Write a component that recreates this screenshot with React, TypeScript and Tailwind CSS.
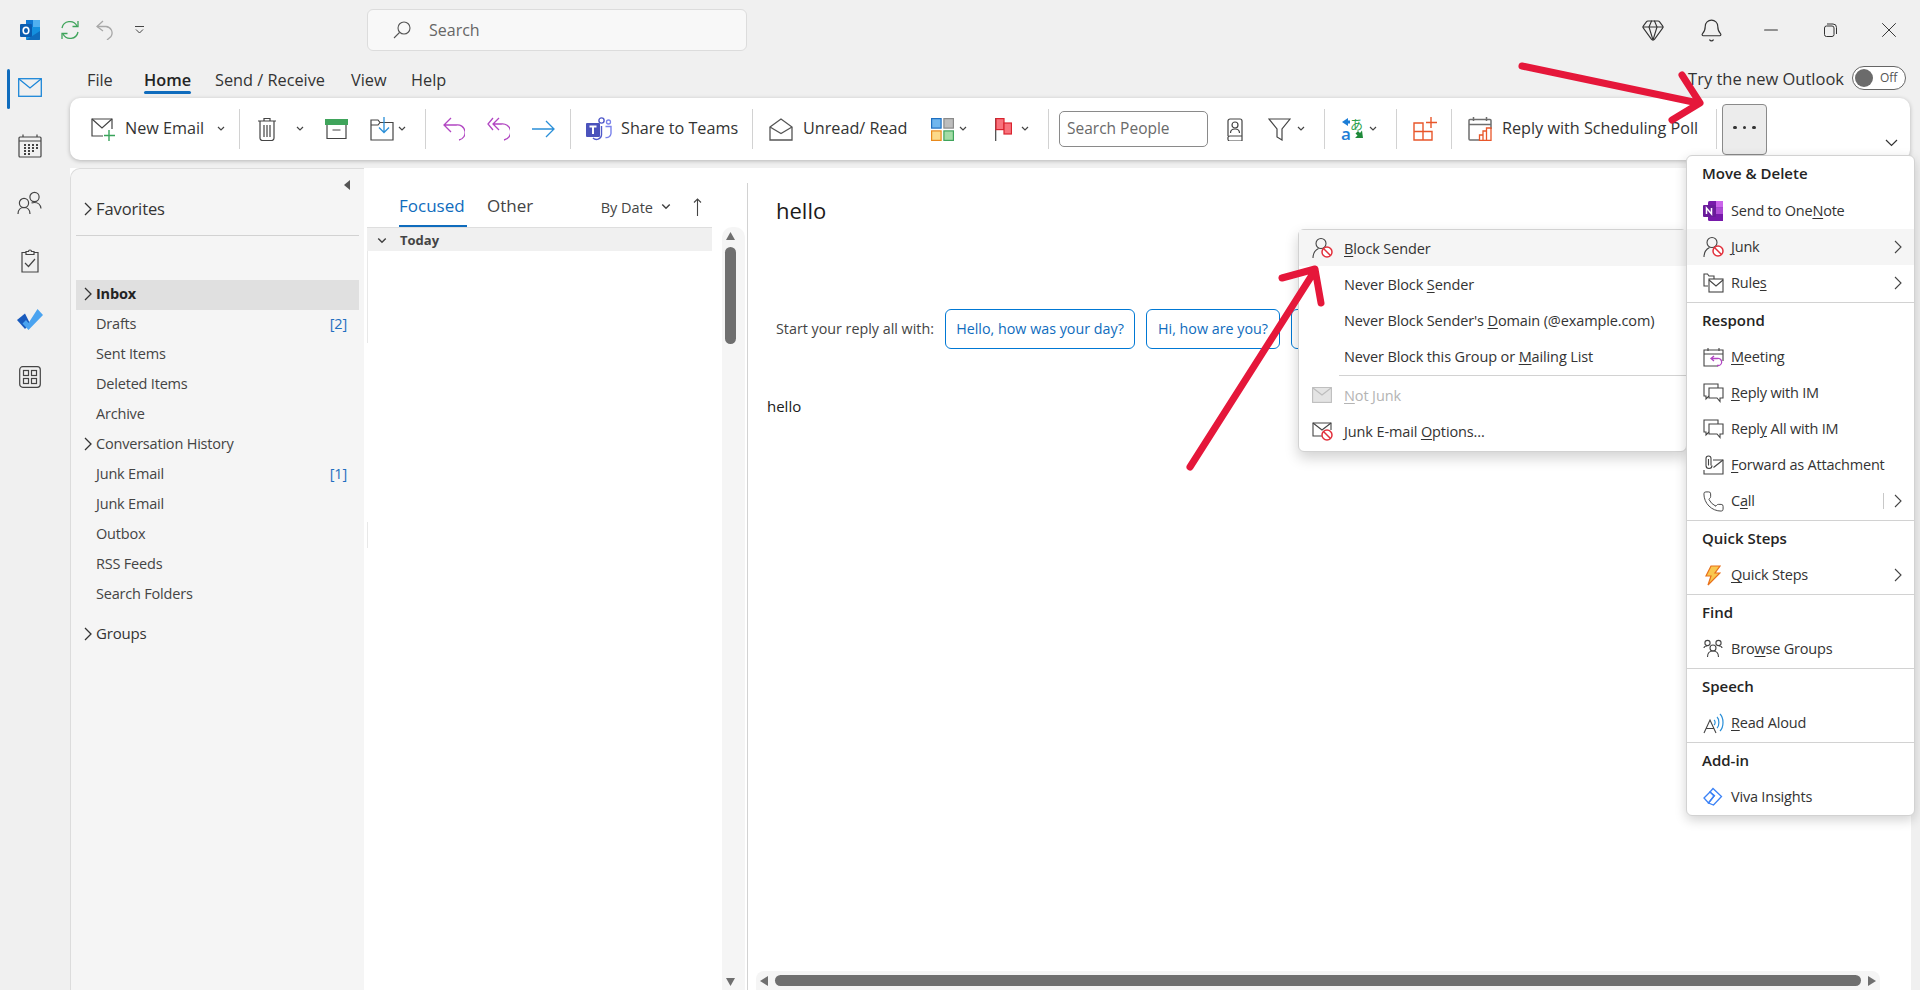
import { ReactNode } from "react";
import { Bell, Gem, Minus, Phone, X } from "lucide-react";

// small drawing helpers
const Chev = ({ className = "" }: { className?: string }) => (
  <svg width="8" height="6" viewBox="0 0 8 6" className={`shrink-0 ${className}`} fill="none" stroke="#444" strokeWidth="1.2">
    <path d="M1 1l3 3 3-3" />
  </svg>
);

const RightChev = () => (
  <svg width="8" height="14" viewBox="0 0 8 14" fill="none" stroke="#444" strokeWidth="1.1">
    <path d="M1 1l6 6-6 6" />
  </svg>
);

const Sep = ({ className = "" }: { className?: string }) => <div className={`w-px h-[40px] bg-[#d2d2d2] shrink-0 ${className}`} />;

const NoEntry = ({ cx = 16, cy = 16, r = 4.6 }: { cx?: number; cy?: number; r?: number }) => (
  <g fill="#fff" stroke="#e2303c" strokeWidth="1.5">
    <circle cx={cx} cy={cy} r={r} />
    <path d={`M${cx - r * 0.7} ${cy - r * 0.7}L${cx + r * 0.7} ${cy + r * 0.7}`} />
  </g>
);

const BlockIcon = () => (
  <svg width="21" height="22" viewBox="0 0 21 22" fill="none" stroke="#444" strokeWidth="1.1">
    <circle cx="9" cy="6.500" r="5" />
    <path d="M1 21c0-5 2.500-8 5.500-9.500" />
    <NoEntry cx={15} cy={15} r={5} />
  </svg>
);

const OneNoteIcon = () => (
  <svg width="20" height="20" viewBox="0 0 20 20">
    <rect x="5" y="0" width="15" height="20" rx="1.500" fill="#7719aa" />
    <rect x="13" y="0" width="7" height="6.500" fill="#ca64ea" />
    <rect x="13" y="6.500" width="7" height="6.500" fill="#ae4bd5" />
    <rect x="13" y="13" width="7" height="7" fill="#7719aa" />
    <rect x="0" y="4" width="13" height="12" rx="1" fill="#6a1b9a" />
    <path d="M3.500 13V7l5 6V7" fill="none" stroke="#fff" strokeWidth="1.500" />
  </svg>
);

const RulesIcon = () => (
  <svg width="21" height="20" viewBox="0 0 21 20" fill="none" stroke="#444" strokeWidth="1.1">
    <path d="M5 13H1V1h3.500l1.500 2h5v3" />
    <rect x="6" y="6" width="14" height="13" fill="#fff" />
    <path d="M6 7l7 6 7-6" />
  </svg>
);

const MeetingIcon = () => (
  <svg width="21" height="20" viewBox="0 0 21 20" fill="none" stroke="#444" strokeWidth="1.1">
    <path d="M15 19H1V3h19v11" />
    <path d="M1 7h19M5 1v3M16 1v3" />
    <path d="M11 9l-3 2.500 3 2.500M8 11.500h6a3.500 3.500 0 0 1 2 7h-2" stroke="#b146c2" strokeWidth="1.300" />
  </svg>
);

const ImIcon = () => (
  <svg width="21" height="20" viewBox="0 0 21 20" fill="none" stroke="#444" strokeWidth="1.1">
    <path d="M15 5V1H1v12h2v3l3-3" />
    <path d="M6 5h14v10h-3v3.500L14 15H6z" fill="#fff" />
  </svg>
);

const AttachIcon = () => (
  <svg width="21" height="20" viewBox="0 0 21 20" fill="none" stroke="#444" strokeWidth="1.1">
    <path d="M10 5h10v14H1v-4" />
    <path d="M10.500 12.500L20 5" />
    <path d="M8 10.500V3.500a2.500 2.500 0 0 0-5 0v7a3 3 0 0 0 6 0" />
    <path d="M5.500 4v6.500" />
  </svg>
);

const GroupsIcon = () => (
  <svg width="20" height="20" viewBox="0 0 20 20" fill="none" stroke="#444" strokeWidth="1.1">
    <circle cx="4.500" cy="4" r="2.600" />
    <circle cx="15.500" cy="4" r="2.600" />
    <circle cx="10" cy="9" r="3" />
    <path d="M1 9c0-1.500 1-2 3-2M19 9c0-1.500-1-2-3-2M4.500 18c0-4 2-6 5.500-6s5.500 2 5.500 6" />
  </svg>
);

const ReadIcon = () => (
  <svg width="21" height="21" viewBox="0 0 21 21" fill="none">
    <path d="M1 20L7 7l6 13M3 15.500h8" stroke="#444" strokeWidth="1.100" />
    <path d="M11 7c1.500 1 1.500 4 0 5M14 4c2.500 2 2.500 9 0 11M17 1c4 4 4 13 0 17" stroke="#2a8fd8" strokeWidth="1.200" />
  </svg>
);

const VivaIcon = () => (
  <svg width="20" height="20" viewBox="0 0 20 20" fill="none" stroke="#3b82f6" strokeWidth="1.300">
    <path d="M1 11l6-6 4 4-5.500 7z" />
    <path d="M7 5l3-3.500 8.500 8-8 8.500-5-2 6-7.500z" />
  </svg>
);

const BoltIcon = () => (
  <svg width="16" height="21" viewBox="0 0 16 21" fill="#f9c74f" stroke="#e8701a" strokeWidth="1.200">
    <path d="M6 1h9l-5 7h5L3 20l3-9H1z" />
  </svg>
);

const u = (s: string) => <u className="underline-offset-2">{s}</u>;

const MenuHead = ({ children, first }: { children: ReactNode; first?: boolean }) => (
  <div className={`flex items-center pl-[15px] pb-[2px] text-[15px] font-semibold text-[#242424] ${first ? "h-[37px]" : "h-[36px]"}`}>{children}</div>
);

const MenuRow = ({ icon, children, arrow, hover, divider }: { icon: ReactNode; children: ReactNode; arrow?: boolean; hover?: boolean; divider?: boolean }) => (
  <div className={`h-[36px] flex items-center text-[14.5px] tracking-[-0.2px] text-[#333] ${hover ? "bg-[#f5f5f5]" : ""}`}>
    <div className="w-[44px] flex justify-center pl-[8px] shrink-0">{icon}</div>
    <div className="flex-1 whitespace-nowrap">{children}</div>
    {divider && <div className="w-px h-[16px] bg-[#c8c8c8] mr-[10px]" />}
    {arrow && <div className="mr-[12px] flex items-center"><RightChev /></div>}
  </div>
);

const MenuLine = () => (
  <div className="h-[2px] pt-px">
    <div className="h-px bg-[#d2d2d2]" />
  </div>
);

const SubRow = ({ icon, children, hover, muted }: { icon?: ReactNode; children: ReactNode; hover?: boolean; muted?: boolean }) => (
  <div className={`h-[36px] flex items-center text-[14.5px] tracking-[-0.12px] ${muted ? "text-[#b4b4b4]" : "text-[#333]"} ${hover ? "bg-[#f5f5f5]" : ""}`}>
    <div className="w-[45px] flex justify-center pl-[1px] shrink-0">{icon}</div>
    <div className="whitespace-nowrap pt-[1px]">{children}</div>
  </div>
);

const folders = [
  { name: "Drafts", badge: "[2]" },
  { name: "Sent Items" },
  { name: "Deleted Items" },
  { name: "Archive" },
  { name: "Conversation History", caret: true },
  { name: "Junk Email", badge: "[1]" },
  { name: "Junk Email" },
  { name: "Outbox" },
  { name: "RSS Feeds" },
  { name: "Search Folders" },
];

const Caret = () => (
  <svg width="8" height="14" viewBox="0 0 8 14" fill="none" stroke="#333" strokeWidth="1.300">
    <path d="M1 1l6 6-6 6" />
  </svg>
);

export default function App() {
  return (
    <div className="relative w-[1920px] h-[990px] overflow-hidden bg-[#f0f0f0] font-['Open_Sans',sans-serif] text-[#333]">
      {/* title bar */}
      <div className="h-[58px] flex items-start relative">
        <div className="flex items-center h-[60px] pl-[20px]">
          <svg width="20" height="20" viewBox="0 0 20 20">
            <rect x="6" y="0" width="14" height="20" rx="1" fill="#1490df" />
            <rect x="6" y="0" width="7" height="7" fill="#0f78d4" />
            <rect x="13" y="0" width="7" height="7" fill="#50b0f0" />
            <path d="M6 20l14-9v8a1 1 0 0 1-1 1z" fill="#0f6cbd" />
            <rect x="0" y="4" width="12" height="13" rx="1" fill="#0a5cb0" />
            <ellipse cx="6" cy="10.500" rx="2.800" ry="3.300" fill="none" stroke="#fff" strokeWidth="1.600" />
          </svg>
          <svg className="ml-[20px]" width="20" height="20" viewBox="0 0 20 20" fill="none" stroke="#3fa45b" strokeWidth="1.300">
            <path d="M2 8a8 8 0 0 1 15-2" />
            <path d="M18 1v5.500h-5.500" />
            <path d="M18 12a8 8 0 0 1-15 2" />
            <path d="M2 19v-5.500h5.500" />
          </svg>
          <svg className="ml-[16px]" width="18" height="20" viewBox="0 0 18 20" fill="none" stroke="#a8a8a8" strokeWidth="1.300">
            <path d="M7 1L1 6.500 7 11" />
            <path d="M1 6.500h9a6.500 6.500 0 0 1 5 10L11 20" />
          </svg>
          <svg className="ml-[21px]" width="9" height="8" viewBox="0 0 9 8" fill="none" stroke="#444" strokeWidth="1">
            <path d="M0 .5h9M1 3.500l3.500 3.500L8 3.500" />
          </svg>
          <div className="ml-[223px] w-[380px] h-[42px] rounded-[6px] bg-[#f8f8f8] border border-[#dcdcdc] flex items-center pl-[25px] text-[16px] text-[#666]">
            <svg width="18" height="18" viewBox="0 0 18 18" fill="none" stroke="#555" strokeWidth="1.100">
              <circle cx="11" cy="7" r="6" />
              <path d="M6.500 11.500L1 17" />
            </svg>
            <span className="ml-[18px]">Search</span>
          </div>
        </div>
        <div className="flex items-center h-[60px] ml-auto">
          <Gem size={24} strokeWidth={1.1} color="#333" />
          <Bell size={25} strokeWidth={1.1} color="#333" className="ml-[34px]" />
          <Minus size={22} strokeWidth={1.1} color="#333" className="ml-[36px]" />
          <svg className="ml-[42px]" width="13" height="14" viewBox="0 0 13 14" fill="none" stroke="#333" strokeWidth="1">
            <rect x=".5" y="3" width="9.500" height="10.500" rx="2" />
            <path d="M3 1h6a3.500 3.500 0 0 1 3.500 3.500V11" />
          </svg>
          <X size={26} strokeWidth={0.9} color="#333" className="ml-[39px] mr-[18px]" />
        </div>
      </div>

      <div className="flex h-[932px]">
        {/* left rail */}
        <div className="w-[70px] shrink-0 relative pr-[11px]">
          <div className="absolute left-[7px] top-[11px] w-[3px] h-[40px] bg-[#0f6cbd] rounded-full" />
          <div className="h-[58px] flex items-center justify-center">
            <svg width="24" height="19" viewBox="0 0 24 19" fill="none" stroke="#1c86d8" strokeWidth="1.300">
              <rect x=".7" y=".7" width="22.600" height="17.600" />
              <path d="M1 1l11 9 11-9" />
            </svg>
          </div>
          <div className="h-[58px] flex items-center justify-center pt-[2px]">
            <svg width="24" height="24" viewBox="0 0 24 24" fill="none" stroke="#444" strokeWidth="1.200">
              <rect x="1" y="3" width="22" height="20" rx="1" />
              <path d="M1 7h22M5 .5V3M19 .5V3" />
              <path d="M6 11h2M10 11h2M14 11h2M18 11h2M6 14h2M10 14h2M14 14h2M18 14h2M6 17h2M10 17h2M14 17h2M6 20h2M10 20h2" strokeWidth="2" />
            </svg>
          </div>
          <div className="h-[58px] flex items-center justify-center">
            <svg width="25" height="24" viewBox="0 0 25 24" fill="none" stroke="#444" strokeWidth="1.200">
              <circle cx="7" cy="12" r="4.600" />
              <path d="M1 23c0-4 2.500-6.500 6-6.500s6 2.500 6 6.500" />
              <circle cx="17.500" cy="6" r="4.600" />
              <path d="M14.500 12c.8-.4 2-.5 3-.5 3.500 0 6 2.500 6.500 6" />
            </svg>
          </div>
          <div className="h-[58px] flex items-center justify-center">
            <svg width="18" height="24" viewBox="0 0 18 24" fill="none" stroke="#444" strokeWidth="1.200">
              <path d="M5 3.500H1V23h16V3.500h-4" />
              <path d="M5 5.500V2.500h2.500a1.500 1.500 0 0 1 3 0H13v3z" />
              <path d="M4 14l3.500 3.500L14 10" />
            </svg>
          </div>
          <div className="h-[58px] flex items-center justify-center">
            <svg width="26" height="21" viewBox="0 0 26 21">
              <path d="M8 4.500L0 11l8 9 5-5.500z" fill="#185abd" />
              <path d="M20.500 0L26 6 11.500 21 5.500 14.500 9 11l2.500 3z" fill="#4aa3f0" />
            </svg>
          </div>
          <div className="h-[58px] flex items-center justify-center">
            <svg width="22" height="22" viewBox="0 0 22 22" fill="none" stroke="#444" strokeWidth="1.200">
              <rect x=".7" y=".7" width="20.600" height="20.600" rx="3" />
              <rect x="4.500" y="4.500" width="5" height="5" />
              <rect x="12.500" y="4.500" width="5" height="5" />
              <rect x="4.500" y="12.500" width="5" height="5" />
              <rect x="12.500" y="12.500" width="5" height="5" />
            </svg>
          </div>
        </div>

        <div className="flex-1 min-w-0 flex flex-col">
          {/* tabs */}
          <div className="h-[40px] flex items-center pl-[17px] text-[16.3px] text-[#333] relative">
            <div className="w-[57px] pt-[4px]">File</div>
            <div className="w-[71px] pt-[4px] relative font-semibold text-[#242424]">
              Home
              <div className="absolute left-0 top-[27px] w-[47px] h-[3px] bg-[#0f6cbd] rounded-full" />
            </div>
            <div className="w-[136px] pt-[4px] whitespace-nowrap">Send / Receive</div>
            <div className="w-[60px] pt-[4px]">View</div>
            <div className="pt-[4px]">Help</div>
            <div className="ml-auto flex items-center mr-[14px]">
              <span className="text-[16.5px] pt-[2px] whitespace-nowrap">Try the new Outlook</span>
              <div className="ml-[8px] w-[54px] h-[24px] rounded-full border border-[#666] bg-white flex items-center pl-[2px] text-[12px] text-[#555]">
                <div className="w-[18px] h-[18px] rounded-full bg-[#6b6b6b]" />
                <span className="ml-[7px]">Off</span>
              </div>
            </div>
          </div>

          {/* ribbon */}
          <div className="h-[62px] mr-[10px] bg-white rounded-[10px] shadow-[0_1px_4px_rgba(0,0,0,0.25)] flex items-center pl-[21px] text-[16.2px] text-[#333] whitespace-nowrap relative z-10">
            <svg className="shrink-0" width="24" height="23" viewBox="0 0 24 23" fill="none" stroke="#444" strokeWidth="1.200">
              <path d="M12 18H1V1h20v10" />
              <path d="M1 1l10 9 10-9" />
              <path d="M18 12v11M13 17.500h11" stroke="#38a35a" strokeWidth="1.400" />
            </svg>
            <span className="ml-[10px] w-[80px] pb-[2px]">New Email</span>
            <Chev className="ml-[12px]" />
            <Sep className="ml-[14px]" />
            <svg className="ml-[18px] shrink-0" width="18" height="24" viewBox="0 0 18 24" fill="none" stroke="#444" strokeWidth="1.200">
              <path d="M0 4h18M6 4V1.500h6V4M2 4v17a2.500 2.500 0 0 0 2.500 2.500h9A2.500 2.500 0 0 0 16 21V4M6 8v12M9 8v12M12 8v12" />
            </svg>
            <Chev className="ml-[20px]" />
            <svg className="ml-[21px] shrink-0" width="23" height="20" viewBox="0 0 23 20">
              <rect x="0" y="0" width="23" height="6" fill="#3fa45b" />
              <path d="M2 6v13.500h19V6M7.500 11h8" fill="none" stroke="#444" strokeWidth="1.200" />
            </svg>
            <svg className="ml-[22px] shrink-0" width="24" height="24" viewBox="0 0 24 24" fill="none" stroke="#444" strokeWidth="1.200">
              <path d="M1 23V3h7l2 2.500h13V23z" />
              <path d="M1 8h7l2-2.500" />
              <path d="M14 0v15M9 10.500l5 5 5-5" stroke="#2a8fd8" strokeWidth="1.300" />
            </svg>
            <Chev className="ml-[4px]" />
            <Sep className="ml-[19px]" />
            <svg className="ml-[17px] shrink-0" width="22" height="24" viewBox="0 0 22 24" fill="none" stroke="#b146c2" strokeWidth="1.300">
              <path d="M8 1L1 8l7 7M1 8h12a7.500 7.500 0 0 1 3 15" />
            </svg>
            <svg className="ml-[22px] shrink-0" width="23" height="24" viewBox="0 0 23 24" fill="none" stroke="#b146c2" strokeWidth="1.300">
              <path d="M6 1L1 7l5 6M12 1L6 7l6 6M6 7h8a7.500 7.500 0 0 1 3 16" />
            </svg>
            <svg className="ml-[22px] shrink-0" width="23" height="18" viewBox="0 0 23 18" fill="none" stroke="#2a8fd8" strokeWidth="1.300">
              <path d="M0 9h22M14 1l8 8-8 8" />
            </svg>
            <Sep className="ml-[15px]" />
            <svg className="ml-[15px] shrink-0" width="26" height="24" viewBox="0 0 26 24" fill="none">
              <circle cx="15.500" cy="3.500" r="2.600" stroke="#5059c9" strokeWidth="1.400" />
              <circle cx="22.500" cy="5" r="2" stroke="#7b83eb" strokeWidth="1.300" />
              <path d="M15.500 9v9a5 5 0 0 1-8.500 3" stroke="#5059c9" strokeWidth="1.400" />
              <path d="M19.500 9.500h5.500v7a4.500 4.500 0 0 1-5.500 4" stroke="#7b83eb" strokeWidth="1.400" />
              <rect x="0" y="6" width="14" height="14" rx="1" fill="#4b53bc" />
              <path d="M3.500 9.500h7M7 9.500V17" stroke="#fff" strokeWidth="2" />
            </svg>
            <span className="ml-[9px] w-[116px] pb-[2px]">Share to Teams</span>
            <Sep className="ml-[15px]" />
            <svg className="ml-[16px] shrink-0" width="24" height="23" viewBox="0 0 24 23" fill="none" stroke="#555" strokeWidth="1.300">
              <path d="M1 9l11-8 11 8v13H1z" />
              <path d="M1 9l11 6.500L23 9" />
            </svg>
            <span className="ml-[10px] w-[105px] pb-[2px]">Unread/ Read</span>
            <svg className="ml-[23px] shrink-0" width="23" height="23" viewBox="0 0 23 23" strokeWidth="1.200">
              <rect x=".6" y=".6" width="9.500" height="9.500" fill="#6fb6ee" stroke="#1e6fc0" />
              <rect x="12.900" y=".6" width="9.500" height="9.500" fill="#bdbdbd" stroke="#8a8a8a" />
              <rect x=".6" y="12.900" width="9.500" height="9.500" fill="#fcd98a" stroke="#e8891c" />
              <rect x="12.900" y="12.900" width="9.500" height="9.500" fill="#a3dca6" stroke="#3fa45b" />
            </svg>
            <Chev className="ml-[5px]" />
            <svg className="ml-[28px] shrink-0" width="17" height="23" viewBox="0 0 17 23">
              <path d="M.7 0v23" stroke="#444" strokeWidth="1.200" />
              <rect x="1" y=".6" width="8" height="11" fill="#f8727c" stroke="#d9232e" strokeWidth="1.200" />
              <rect x="9" y="5" width="7.500" height="11" fill="#f8727c" stroke="#d9232e" strokeWidth="1.200" />
            </svg>
            <Chev className="ml-[9px]" />
            <Sep className="ml-[19px]" />
            <div className="ml-[10px] w-[149px] h-[36px] rounded-[5px] border border-[#8a8a8a] flex items-center pl-[7px] text-[15.5px] text-[#6a6a6a] shrink-0">Search People</div>
            <svg className="ml-[19px] shrink-0" width="16" height="23" viewBox="0 0 16 23" fill="none" stroke="#444" strokeWidth="1.200">
              <path d="M1 18V3a2 2 0 0 1 2-2h10a2 2 0 0 1 2 2v20H3a2 2 0 0 1-2-2.500A2 2 0 0 1 3 18h12" />
              <circle cx="8" cy="7" r="3" />
              <path d="M3.500 15c0-2.500 2-4 4.500-4s4.500 1.500 4.500 4" />
            </svg>
            <svg className="ml-[25px] shrink-0" width="23" height="23" viewBox="0 0 23 23" fill="none" stroke="#444" strokeWidth="1.200">
              <path d="M1 1h21l-8 10v11l-5-3v-8z" />
            </svg>
            <Chev className="ml-[6px]" />
            <Sep className="ml-[19px]" />
            <svg className="ml-[16px] shrink-0 overflow-visible" width="24" height="24" viewBox="0 0 24 24">
              <path d="M1 5l6-4v2.500h2v3H7V9z" fill="#1c7dd6" />
              <path d="M22 21h-8l2.500-2.500-2-2 2.500-2.500 2 2L21 13.500z" fill="#1f8a3a" />
              <text x="9" y="12" fontSize="13" fill="#2ba04a" fontFamily="'Noto Sans CJK JP',sans-serif">あ</text>
              <text x="0" y="23" fontSize="17" fontWeight="600" fill="#1c7dd6" fontFamily="'Open Sans',sans-serif">a</text>
            </svg>
            <Chev className="ml-[4px]" />
            <Sep className="ml-[19px]" />
            <svg className="ml-[16px] shrink-0" width="24" height="24" viewBox="0 0 24 24" fill="none" stroke="#e8562a" strokeWidth="1.400">
              <path d="M1 6h9v8.500h9V23H1zM1 14.500h9M10 14.500V23" />
              <path d="M18 0v11M13 5.500h11" />
            </svg>
            <Sep className="ml-[14px]" />
            <svg className="ml-[16px] shrink-0" width="24" height="24" viewBox="0 0 24 24" fill="none" stroke="#6e6e6e" strokeWidth="1.500">
              <path d="M11 23H2a1 1 0 0 1-1-1V3.500a1 1 0 0 1 1-1h20a1 1 0 0 1 1 1V12M1 7.500h22M5.500 0v4M18.500 0v4" />
              <path d="M11.500 18h3.500v5.500h-3.500zM15 14h3.500v9.500H15zM18.500 11H23v12.500h-4.500z" stroke="#e8562a" strokeWidth="1.300" />
            </svg>
            <span className="ml-[10px] w-[198px] pb-[2px]">Reply with Scheduling Poll</span>
            <Sep className="ml-[16px]" />
            <div className="ml-[5px] w-[45px] h-[51px] rounded-[4px] border border-[#8a8a8a] bg-[#ececec] flex items-center justify-center gap-[6px] pb-[3px] shrink-0">
              <div className="w-[3.500px] h-[3.500px] rounded-full bg-[#333]" />
              <div className="w-[3.500px] h-[3.500px] rounded-full bg-[#333]" />
              <div className="w-[3.500px] h-[3.500px] rounded-full bg-[#333]" />
            </div>
            <svg className="ml-[118px] mt-[28px] shrink-0" width="13" height="8" viewBox="0 0 13 8" fill="none" stroke="#333" strokeWidth="1.200">
              <path d="M1 1l5.500 5.500L12 1" />
            </svg>
          </div>

          {/* panes */}
          <div className="flex-1 min-h-0 mt-[8px] mr-[9px] flex bg-white">
            {/* nav */}
            <div className="w-[294px] shrink-0 bg-[#f5f5f5] rounded-tl-[10px] border-l border-t border-[#dcdcdc] text-[14.5px] tracking-[-0.2px] text-[#444] pr-[5px] pl-[5px]">
              <div className="h-[66px] relative">
                <svg className="absolute right-[8px] top-[11px]" width="7" height="10" viewBox="0 0 7 10" fill="#555">
                  <path d="M6 0v10L0 5z" />
                </svg>
                <div className="flex items-center h-full pl-[8px] pt-[14px] text-[16.500px] tracking-[-0.1px] text-[#333]">
                  <Caret />
                  <span className="ml-[4px]">Favorites</span>
                </div>
              </div>
              <div className="h-px bg-[#d2d2d2]" />
              <div className="h-[44px]" />
              <div className="h-[30px] flex items-center pl-[8px] pb-[2px] bg-[#e0e0e0] font-bold text-[#242424]">
                <Caret />
                <span className="ml-[4px]">Inbox</span>
              </div>
              {folders.map((f, i) => (
                <div key={i} className="h-[30px] flex items-center pl-[8px] pb-[3px]">
                  <div className="w-[8px]">{f.caret && <Caret />}</div>
                  <span className="ml-[4px] whitespace-nowrap">{f.name}</span>
                  {f.badge && <span className="ml-auto mr-[12px] text-[#1f6fc0]">{f.badge}</span>}
                </div>
              ))}
              <div className="h-[25px] flex items-center pl-[8px] mt-[12px] pb-[2px] text-[15px] text-[#333]">
                <Caret />
                <span className="ml-[4px]">Groups</span>
              </div>
            </div>

            {/* message list */}
            <div className="w-[383px] shrink-0 flex flex-col">
              <div className="h-[59px] flex items-end pl-[35px] relative">
                <div className="w-[68px] h-[42px] text-[17px] text-[#0f6cbd] border-b-2 border-[#0f6cbd] flex items-start pt-[8px]">Focused</div>
                <div className="ml-[20px] h-[42px] text-[17px] text-[#444] flex items-start pt-[8px]">Other</div>
                <div className="ml-auto h-[42px] flex items-start pt-[12px] text-[14.5px] text-[#444] mr-[45px]">
                  <span>By Date</span>
                  <Chev className="ml-[9px] mt-[7px] scale-125" />
                  <svg className="ml-[23px] mt-[1px]" width="9" height="18" viewBox="0 0 9 18" fill="none" stroke="#444" strokeWidth="1.100">
                    <path d="M4.500 18V1M1 4.500L4.500 1 8 4.500" />
                  </svg>
                </div>
              </div>
              <div className="flex-1 min-h-0 flex pl-[3px]">
                <div className="w-[345px] shrink-0 flex flex-col">
                  <div className="h-[24px] bg-[#f0f0f0] border-t border-[#dedede] flex items-center pl-[11px] pt-[3px] text-[13px] font-bold text-[#444]">
                    <Chev className="scale-125" />
                    <span className="ml-[14px]">Today</span>
                  </div>
                  <div className="w-px h-[92px] bg-[#e8e8e8]" />
                  <div className="w-px h-[26px] mt-[179px] bg-[#e8e8e8]" />
                </div>
                <div className="ml-[10px] w-[23px] bg-[#f5f5f5] rounded-t-[10px] flex flex-col items-center pt-[5px] pb-[4px] pr-[6px]">
                  <svg width="9" height="8" viewBox="0 0 9 8" fill="#6f6f6f"><path d="M4.500 0L9 8H0z" /></svg>
                  <div className="mt-[7px] w-[11px] h-[97px] rounded-full bg-[#6f6f6f]" />
                  <svg className="mt-auto" width="9" height="8" viewBox="0 0 9 8" fill="#6f6f6f"><path d="M0 0h9L4.500 8z" /></svg>
                </div>
              </div>
            </div>

            {/* reading pane */}
            <div className="flex-1 min-w-0 border-l border-[#d2d2d2] flex flex-col mt-[15px]">
              <div className="pl-[28px] pt-[13px] h-[42px] text-[22px] leading-[28px] text-[#1a1a1a]">hello</div>
              <div className="mt-[84px] flex items-center pl-[28px] text-[14.300px] whitespace-nowrap">
                <span className="w-[169px] text-[#444]">Start your reply all with:</span>
                <div className="w-[190px] h-[40px] rounded-[6px] border border-[#0078d4] flex items-center justify-center text-[#0f6cbd]">Hello, how was your day?</div>
                <div className="ml-[11px] w-[134px] h-[40px] rounded-[6px] border border-[#0078d4] flex items-center justify-center text-[#0f6cbd]">Hi, how are you?</div>
                <div className="ml-[11px] w-[60px] h-[40px] rounded-[6px] border border-[#0078d4]" />
              </div>
              <div className="mt-[46px] pl-[19px] text-[15px] text-[#1a1a1a]">hello</div>
              <div className="mt-auto ml-[8px] mr-[31px] h-[19px] bg-[#f5f5f5] rounded-t-[8px] flex items-center px-[4px] gap-[7px]">
                <svg width="8" height="10" viewBox="0 0 8 10" fill="#6f6f6f"><path d="M8 0v10L0 5z" /></svg>
                <div className="flex-1 h-[11px] rounded-full bg-[#6f6f6f]" />
                <svg width="8" height="10" viewBox="0 0 8 10" fill="#6f6f6f"><path d="M0 0v10l8-5z" /></svg>
              </div>
            </div>
          </div>
        </div>
      </div>

      {/* sub menu */}
      <div className="absolute left-[1298px] top-[229px] w-[389px] h-[223px] bg-white rounded-[6px] border border-[#d2d2d2] shadow-[0_6px_14px_rgba(0,0,0,0.18)] z-20">
        <SubRow hover icon={<BlockIcon />}>{u("B")}lock Sender</SubRow>
        <SubRow>Never Block {u("S")}ender</SubRow>
        <SubRow>Never Block Sender's {u("D")}omain (@example.com)</SubRow>
        <SubRow>Never Block this Group or {u("M")}ailing List</SubRow>
        <div className="h-px ml-[40px] mt-[1px] mb-[1px] bg-[#d2d2d2]" />
        <SubRow muted icon={
          <svg width="20" height="16" viewBox="0 0 20 16" fill="#e4e4e4" stroke="#bdbdbd" strokeWidth="1.100"><rect x=".6" y=".6" width="18.800" height="14.800" /><path d="M1 1l9 7 9-7" /></svg>
        }>{u("N")}ot Junk</SubRow>
        <SubRow icon={
          <svg width="21" height="19" viewBox="0 0 21 19" fill="none" stroke="#444" strokeWidth="1.100"><path d="M11 14H1V1h18v7" /><path d="M1 1l9 7 9-7" /><NoEntry cx={15} cy={13} r={5} /></svg>
        }>Junk E-mail {u("O")}ptions...</SubRow>
      </div>

      {/* overflow menu */}
      <div className="absolute left-[1686px] top-[155px] w-[229px] bg-white rounded-[6px] border border-[#d2d2d2] shadow-[0_4px_12px_rgba(0,0,0,0.18)] z-20">
        <MenuHead first>Move &amp; Delete</MenuHead>
        <MenuRow icon={<OneNoteIcon />}>Send to One{u("N")}ote</MenuRow>
        <MenuRow hover arrow icon={<BlockIcon />}>{u("J")}unk</MenuRow>
        <MenuRow arrow icon={<RulesIcon />}>Rule{u("s")}</MenuRow>
        <MenuLine />
        <MenuHead>Respond</MenuHead>
        <MenuRow icon={<MeetingIcon />}>{u("M")}eeting</MenuRow>
        <MenuRow icon={<ImIcon />}>{u("R")}eply with IM</MenuRow>
        <MenuRow icon={<ImIcon />}>Repl{u("y")} All with IM</MenuRow>
        <MenuRow icon={<AttachIcon />}>{u("F")}orward as Attachment</MenuRow>
        <MenuRow arrow divider icon={<Phone size={23} strokeWidth={1} color="#444" />}>C{u("a")}ll</MenuRow>
        <MenuLine />
        <MenuHead>Quick Steps</MenuHead>
        <MenuRow arrow icon={<BoltIcon />}>{u("Q")}uick Steps</MenuRow>
        <MenuLine />
        <MenuHead>Find</MenuHead>
        <MenuRow icon={<GroupsIcon />}>Bro{u("w")}se Groups</MenuRow>
        <MenuLine />
        <MenuHead>Speech</MenuHead>
        <MenuRow icon={<ReadIcon />}>{u("R")}ead Aloud</MenuRow>
        <MenuLine />
        <MenuHead>Add-in</MenuHead>
        <MenuRow icon={<VivaIcon />}>Viva Insights</MenuRow>
      </div>

      {/* red annotation arrows */}
      <svg className="absolute inset-0 z-30 pointer-events-none" width="1920" height="990" viewBox="0 0 1920 990" fill="none" stroke="#e5173a" strokeWidth="7" strokeLinecap="round" strokeLinejoin="round">
        <path d="M1522 66L1698 103M1682 75L1700 103L1672 120" />
        <path d="M1190 467L1314 272M1282 278L1315 269L1321 303" />
      </svg>
    </div>
  );
}
